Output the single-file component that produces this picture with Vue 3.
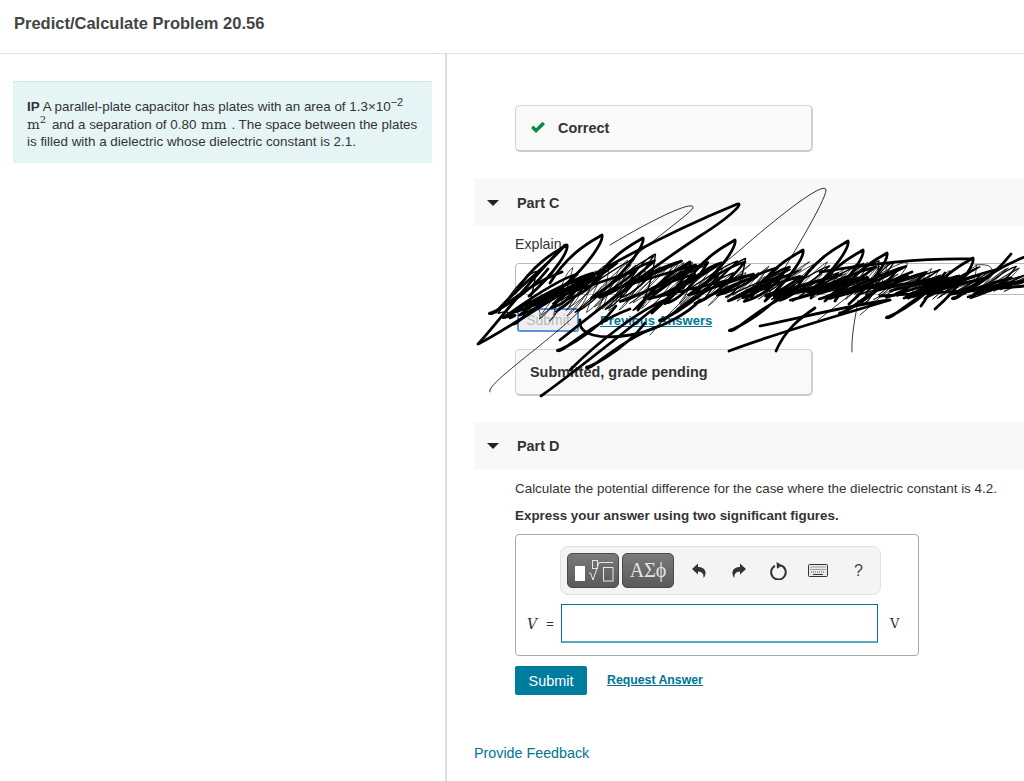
<script setup>
// scribble over part C, seeded so the picture stays the same on each load
let seed = 2056;
const rnd = () => {
  seed = (seed * 16807) % 2147483647;
  return seed / 2147483647;
};

// slanted back-and-forth strokes along the band
const zigzag = (count, x0, x1, spread, reach) => {
  let d = `M${x0} 318`;
  for (let i = 1; i <= count; i++) {
    const t = i / count;
    const base = x0 + (x1 - x0) * t;
    const mid = t < 0.2 ? 302 - 85 * t : 285;
    const size = spread * (1.1 - 0.5 * t) * (0.3 + 0.7 * rnd());
    const up = i % 2 === 0;
    const x = base + (up ? reach : -reach * 0.6) * (0.4 + rnd());
    const y = mid + (up ? -size : size * 0.8);
    const cx = x + (up ? -reach : reach) * 0.45;
    const cy = y + (up ? 5 : -5);
    d += ` Q${cx.toFixed(1)} ${cy.toFixed(1)} ${x.toFixed(1)} ${y.toFixed(1)}`;
  }
  return d;
};

const fine = zigzag(170, 540, 1024, 30, 22);
const medium = zigzag(60, 505, 1015, 34, 34);
const heavy = zigzag(75, 510, 1010, 26, 44);

// thick loops reaching out of the band
const peaks = [[602, 235], [643, 238], [567, 245], [735, 240], [848, 241], [803, 250], [863, 250], [887, 253], [973, 258], [690, 262]];
const dips = [[490, 313], [558, 350], [587, 367], [730, 330], [840, 313], [887, 317], [953, 298], [660, 320]];

const loop = (x, y, bx, by) =>
  `M${bx} ${by} C${bx + (x - bx) * 0.4} ${by + (y - by) * 0.7} ${x - 6} ${y + 4} ${x} ${y} C${x + 2} ${y + 6} ${bx + (x - bx) * 0.6 + 8} ${by + (y - by) * 0.4} ${bx + 14} ${by + 3}`;

const bigThick = [
  ...peaks.map(([x, y]) => loop(x, y, x - 52, y + 48)),
  ...dips.map(([x, y]) => loop(x, y, x + 58, y - 44)),
  "M479 343 C500 320 525 285 565 245 C552 262 520 285 496 312",
  "M478 344 C510 330 600 260 735 205 C745 200 738 212 700 236 C660 262 610 300 560 340",
  "M541 396 C575 372 620 335 665 300 C640 310 600 340 570 370",
  "M729 351 C770 335 830 318 890 300 C850 305 800 318 760 326",
  "M776 351 C785 330 800 318 815 308",
  "M580 320 C578 335 600 340 630 335 C660 330 690 312 700 300",
  "M880 296 C930 292 975 292 1024 286",
  "M820 272 C880 262 930 258 972 259",
];

const bigThin = [
  "M490 392 C483 385 560 335 590 300 C620 262 690 215 693 208 C695 200 660 215 610 245",
  "M765 300 C790 260 826 200 826 190 C825 180 780 215 740 250 C710 275 680 300 650 335",
  "M852 352 C851 335 856 315 858 300",
  "M818 320 C850 295 880 270 905 262 C915 262 890 290 860 315",
  "M970 298 C990 280 1005 262 975 265",
];
</script>

<template>
  <div class="page">
    <header class="top">
      <h1>Predict/Calculate Problem 20.56</h1>
    </header>

    <div class="columns">
      <aside class="left">
        <div class="intro">
          <b>IP</b> A parallel-plate capacitor has plates with an area of 1.3×10<sup>−2</sup><br />
          <span class="math">m</span><sup class="math sq">2</sup> and a separation of 0.80 <span class="math mm">mm</span> . The space between the plates<br />
          is filled with a dielectric whose dielectric constant is 2.1.
        </div>
      </aside>

      <main class="right">
        <div class="status first">
          <svg class="check" viewBox="0 0 16 13" width="16" height="13">
            <path d="M1 7 L3.5 4.6 L6 7.2 L12.6 .8 L15 3.2 L6 12 Z" fill="#0a8a45" />
          </svg>
          <span>Correct</span>
        </div>

        <section class="part part-c">
          <div class="part-head"><i class="caret"></i>Part C</div>
          <div class="inset">
            <p class="explain">Explain</p>
            <div class="textbox"><span class="save">Save</span></div>
            <div class="actions-c">
              <button class="disabled">Submit</button>
              <a class="link">Previous Answers</a>
            </div>
            <div class="status">
              <span>Submitted, grade pending</span>
            </div>
          </div>
        </section>

        <section class="part part-d">
          <div class="part-head"><i class="caret"></i>Part D</div>
          <div class="inset">
            <p class="question">Calculate the potential difference for the case where the dielectric constant is 4.2.</p>
            <p class="hint">Express your answer using two significant figures.</p>

            <div class="answer">
              <div class="toolbar">
                <div class="tool-btn math-btn">
                  <svg viewBox="0 0 52 35" width="52" height="35">
                    <rect x="8" y="13" width="10" height="15" fill="#fff" />
                    <rect x="25.5" y="7.5" width="5" height="8" fill="none" stroke="#e8e8e8" />
                    <path d="M22 20.5 L23.5 20 L26 27 L32 9.5 H46" fill="none" stroke="#e8e8e8" />
                    <rect x="36.5" y="14.5" width="9.5" height="13.5" fill="none" stroke="#e8e8e8" />
                  </svg>
                </div>
                <div class="tool-btn greek-btn">ΑΣϕ</div>
                <svg class="tool undo" viewBox="0 0 16 16" width="16" height="16">
                  <path d="M1 6 L7 .5 V4 C11.5 4 15 6.5 14.5 10.5 C14.3 12.5 13.5 14 12.5 15 C13 11.5 11.5 8.5 7 8.5 V11.5 Z" fill="#333" />
                </svg>
                <svg class="tool redo" viewBox="0 0 16 16" width="16" height="16">
                  <path d="M15 6 L9 .5 V4 C4.5 4 1 6.5 1.5 10.5 C1.7 12.5 2.5 14 3.5 15 C3 11.5 4.5 8.5 9 8.5 V11.5 Z" fill="#333" />
                </svg>
                <svg class="tool reset" viewBox="0 0 18 18" width="18" height="18">
                  <path d="M6 3.8 A7.3 7.3 0 1 0 12.2 3.5" fill="none" stroke="#333" stroke-width="2" />
                  <path d="M7.6 0 L13.4 3.4 L8 6.8 Z" fill="#333" />
                </svg>
                <svg class="tool keys" viewBox="0 0 20 13" width="20" height="13">
                  <rect x=".5" y=".5" width="19" height="12" rx="1" fill="#e9e9e9" stroke="#333" />
                  <path d="M2.5 3 H17.5 M2.5 5.5 H17.5" stroke="#555" stroke-dasharray="1 1" />
                  <path d="M3 8 H17" stroke="#555" stroke-dasharray="1 1" />
                  <path d="M5 10.5 H15" stroke="#333" />
                </svg>
                <span class="help">?</span>
              </div>
              <div class="entry">
                <label><i>V</i><span class="eq">=</span></label>
                <div class="field"></div>
                <span class="unit">V</span>
              </div>
            </div>

            <div class="actions-d">
              <button class="submit">Submit</button>
              <a class="link">Request Answer</a>
            </div>
          </div>
        </section>

        <a class="feedback">Provide Feedback</a>
      </main>
    </div>

    <svg class="scribble" viewBox="0 0 1024 781" width="1024" height="781">
      <path :d="fine" stroke-width=".7" />
      <path :d="medium" stroke-width="1.4" />
      <path :d="heavy" stroke-width="2.6" />
      <path v-for="(d, i) in bigThick" :key="'k' + i" :d="d" stroke-width="2.8" />
      <path v-for="(d, i) in bigThin" :key="'n' + i" :d="d" stroke-width=".8" />
    </svg>
  </div>
</template>

<style scoped>
* {
  box-sizing: border-box;
}

.page {
  position: relative;
  width: 1024px;
  height: 781px;
  overflow: hidden;
  background: #fff;
  color: #333;
  font-family: "Liberation Sans", Arial, sans-serif;
  font-size: 13px;
}

.top {
  height: 54px;
  padding: 14px 14px 0;
  border-bottom: 1px solid #dfe3e8;
}

h1 {
  margin: 0;
  font-size: 16.5px;
  line-height: 19px;
  font-weight: bold;
  color: #444;
}

.columns {
  display: flex;
  height: 727px;
}

.left {
  width: 447px;
  padding: 27px 13px 0 13px;
  border-right: 2px solid #d5e2ee;
}

.intro {
  height: 82px;
  padding: 16px 14px 0;
  background: #e5f5f6;
  border-top: 1px solid #d6e6ea;
  font-size: 13.4px;
  line-height: 17.5px;
}

.intro sup {
  font-size: 11px;
  line-height: 0;
}

.math {
  font-family: "DejaVu Serif", "Liberation Serif", serif;
  font-size: 13.5px;
}

.intro sup.sq {
  margin-right: 2px;
  font-size: 10px;
}

.mm {
  margin: 0 1px;
}

.right {
  flex: 1;
  padding: 51px 0 0 27px;
}

.status {
  display: flex;
  align-items: center;
  gap: 12px;
  width: 298px;
  height: 47px;
  padding: 0 14px 1px;
  background: #f9f9f9;
  border: 1px solid #d4d4d4;
  border-bottom: 2px solid #c9c9c9;
  border-right: 2px solid #d0d0d0;
  border-radius: 5px;
  font-size: 14.4px;
  font-weight: bold;
  color: #333;
}

.status.first {
  margin-left: 41px;
}

.check {
  flex: none;
}

.part-head {
  display: flex;
  align-items: center;
  height: 47px;
  padding-left: 13px;
  background: #f8f8f8;
  font-size: 14.4px;
  font-weight: bold;
  color: #333;
}

.caret {
  width: 0;
  height: 0;
  margin-right: 18px;
  border-style: solid;
  border-width: 6px 6px 0;
  border-color: #222 transparent transparent;
}

.part-c {
  margin-top: 27px;
}

.part-d {
  margin-top: 26px;
}

.inset {
  padding-left: 41px;
}

.explain {
  margin: 10px 0 0;
  font-size: 14.2px;
  line-height: 17px;
}

.textbox {
  position: relative;
  height: 32px;
  margin: 10px -10px 0 0;
  border: 1px solid #bbb;
  border-radius: 4px;
}

.save {
  position: absolute;
  left: 316px;
  top: 8px;
  font-size: 12px;
  color: #777;
}

.actions-c {
  display: flex;
  align-items: center;
  height: 24px;
  margin-top: 13px;
  padding-left: 2px;
}

.disabled {
  width: 62px;
  height: 24px;
  padding: 0;
  background: #eee;
  border: 2px solid #5b93dd;
  border-radius: 3px;
  color: #bbb;
  font: 14px "Liberation Sans", Arial, sans-serif;
}

.actions-c .link {
  margin-left: 21px;
  font-size: 13px;
}

.link {
  color: #007595;
  font-size: 12.3px;
  font-weight: bold;
  text-decoration: underline;
}

.actions-c + .status {
  margin-top: 17px;
}

.question {
  margin: 12px 0 0;
  font-size: 13.42px;
  line-height: 16px;
}

.hint {
  margin: 11px 0 0;
  font-size: 13.4px;
  line-height: 16px;
  font-weight: bold;
}

.answer {
  width: 404px;
  height: 122px;
  margin-top: 10px;
  padding: 11px 37px 0 44px;
  border: 1px solid #aaa;
  border-radius: 4px;
}

.toolbar {
  display: flex;
  align-items: center;
  width: 321px;
  height: 49px;
  padding-left: 6px;
  background: #f4f4f4;
  border: 1px solid #e2e2e2;
  border-radius: 8px;
}

.tool-btn {
  display: flex;
  align-items: center;
  justify-content: center;
  width: 52px;
  height: 35px;
  background: linear-gradient(#7a7a7a, #5a5a5a);
  border: 1px solid #4a4a4a;
  border-radius: 5px;
}

.math-btn svg {
  flex: none;
}

.greek-btn {
  margin-left: 3px;
  color: #e4e4e4;
  font-family: "Liberation Serif", serif;
  font-size: 20px;
}

.tool {
  flex: none;
}

.undo {
  margin-left: 17px;
}

.redo {
  margin-left: 24px;
}

.reset {
  margin-left: 22px;
}

.keys {
  margin-left: 21px;
}

.help {
  margin-left: 26px;
  font-size: 16px;
  color: #444;
}

.entry {
  display: flex;
  align-items: center;
  margin: 9px -38px 0 -44px;
}

.entry label {
  display: flex;
  align-items: center;
  gap: 9px;
  width: 45px;
  padding-left: 11px;
  font-family: "Liberation Sans", Arial, sans-serif;
  font-size: 13px;
}

.entry label i {
  font-family: "DejaVu Serif", "Liberation Serif", serif;
  font-size: 14px;
}

.field {
  width: 317px;
  height: 39px;
  background: #fff;
  border: 1px solid #007595;
  border-bottom: 2px solid #5aa9c2;
}

.unit {
  margin-left: 12px;
  font-family: "DejaVu Serif", "Liberation Serif", serif;
  font-size: 13px;
}

.actions-d {
  display: flex;
  align-items: center;
  margin-top: 10px;
}

.submit {
  width: 72px;
  height: 29px;
  padding: 0;
  background: #007c9e;
  border: none;
  border-radius: 2px;
  color: #fff;
  font: 14.4px "Liberation Sans", Arial, sans-serif;
}

.actions-d .link {
  margin-left: 20px;
  margin-top: -2px;
}

.feedback {
  display: block;
  margin-top: 50px;
  color: #007595;
  font-size: 14.3px;
  line-height: 17px;
}

.scribble {
  position: absolute;
  left: 0;
  top: 0;
  pointer-events: none;
}

.scribble path {
  fill: none;
  stroke: #000;
  stroke-linecap: round;
  stroke-linejoin: round;
}
</style>
